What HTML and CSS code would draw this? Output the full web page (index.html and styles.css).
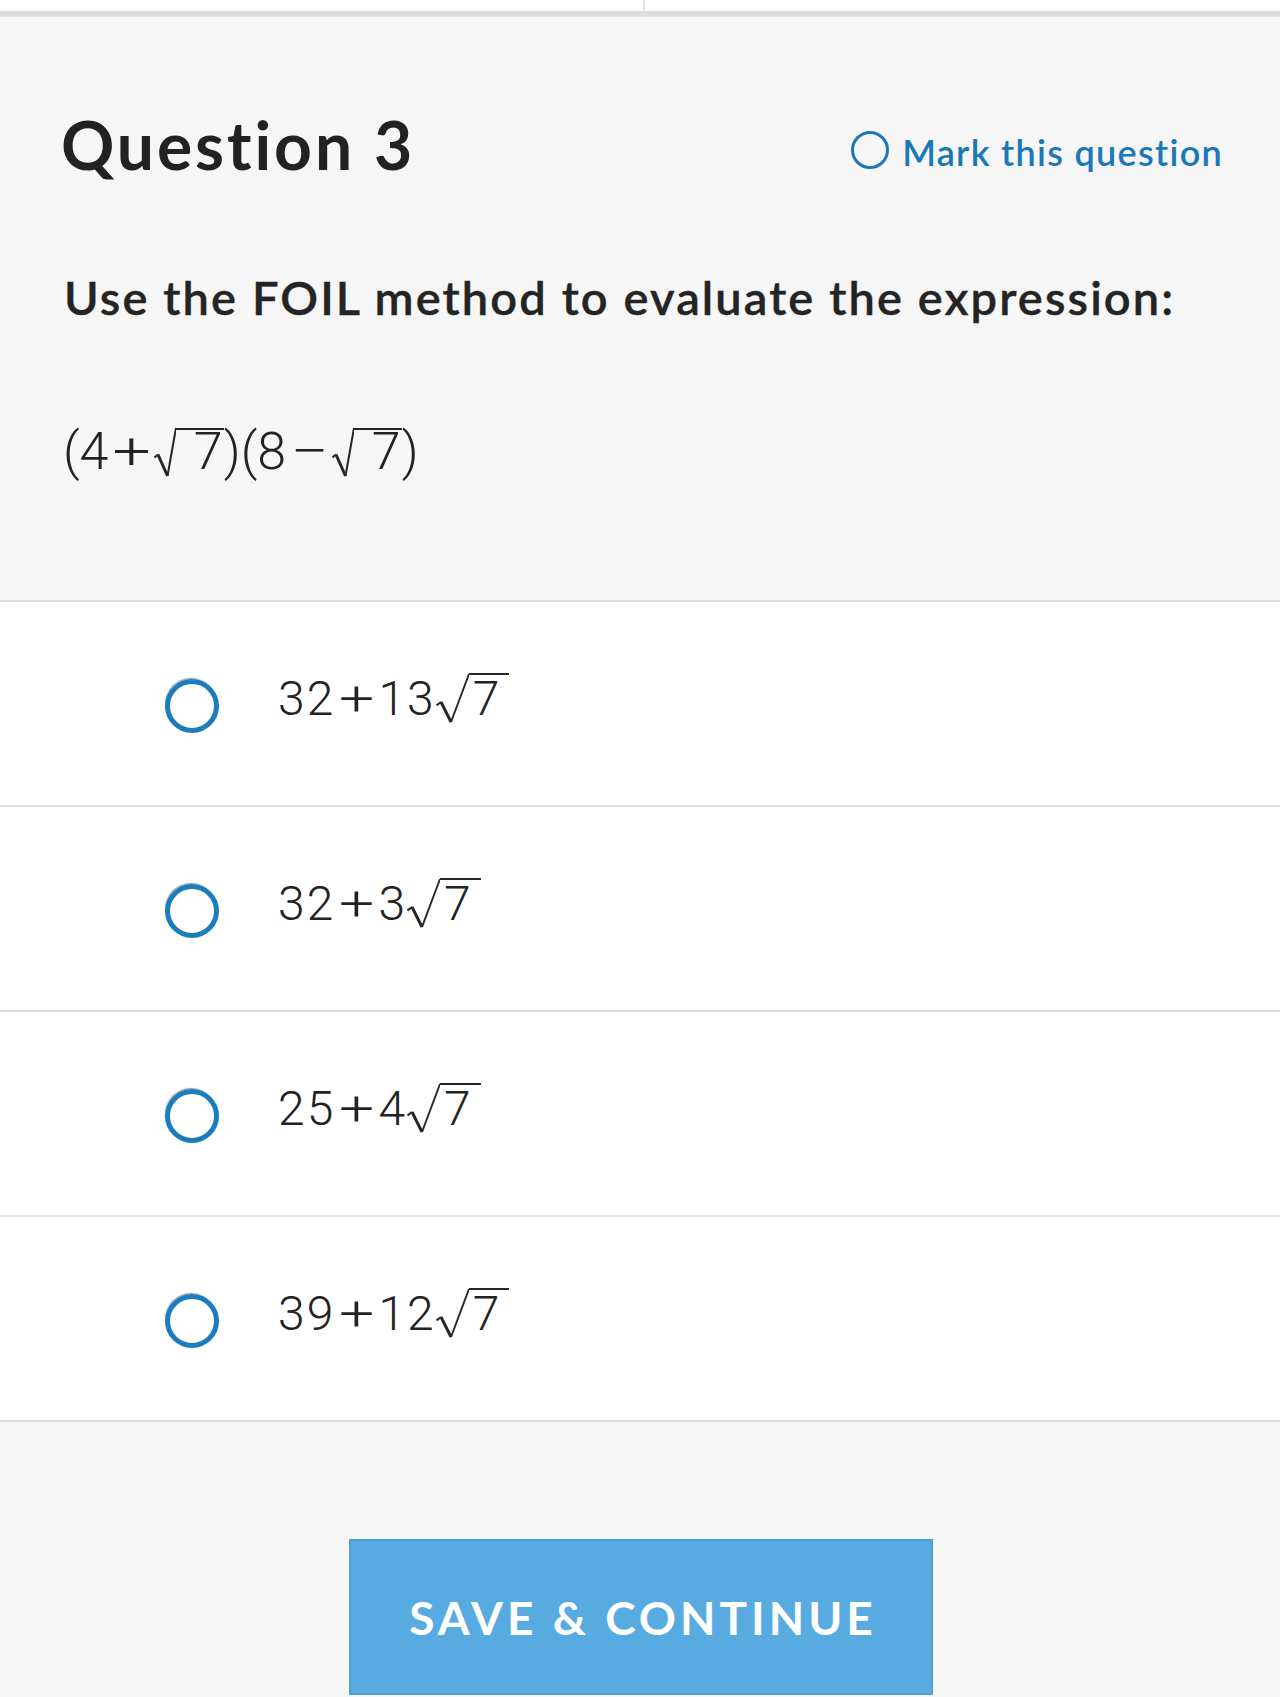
FILE: index.html
```html
<!DOCTYPE html>
<html lang="en">
<head>
<meta charset="utf-8">
<title>Question 3</title>
<link rel="stylesheet" href="styles.css">
</head>
<body>
<div class="topbar">
  <div class="tab tab-left"></div>
  <div class="tab tab-right"></div>
</div>
<div class="topshade"></div>

<section class="question">
  <div class="qhead">
    <h1 class="qtitle">Question 3</h1>
    <a class="mark" href="#"><span class="mark-circle"></span><span class="mark-text">Mark this question</span></a>
  </div>
  <p class="prompt">Use the FOIL method to evaluate the expression:</p>
  <div class="math expr"><span class="paren">(</span><span class="num">4</span><span class="op">+</span><span class="sqrt"><svg class="rad rad-expr" viewBox="0 0 22 50" preserveAspectRatio="none"><path d="M0.5 30.5 L4 27.5" fill="none" stroke="#262626" stroke-width="2"/><path d="M4 27.5 L13.5 49" fill="none" stroke="#262626" stroke-width="3"/><path d="M13.5 49 L22 1" fill="none" stroke="#262626" stroke-width="2"/></svg><span class="radicand">7</span></span><span class="paren">)(</span><span class="num">8</span><span class="op">&minus;</span><span class="sqrt"><svg class="rad rad-expr" viewBox="0 0 22 50" preserveAspectRatio="none"><path d="M0.5 30.5 L4 27.5" fill="none" stroke="#262626" stroke-width="2"/><path d="M4 27.5 L13.5 49" fill="none" stroke="#262626" stroke-width="3"/><path d="M13.5 49 L22 1" fill="none" stroke="#262626" stroke-width="2"/></svg><span class="radicand">7</span></span><span class="paren">)</span></div>
</section>

<ul class="answers">
  <li class="answer">
    <span class="radio"></span>
    <span class="math ans"><span class="num">32</span><span class="op">+</span><span class="num">13</span><span class="sqrt"><svg class="rad" viewBox="0 0 33 50" preserveAspectRatio="none"><path d="M0.5 32.5 L5 29" fill="none" stroke="#262626" stroke-width="2"/><path d="M5 29 L15 49" fill="none" stroke="#262626" stroke-width="3"/><path d="M15 49 L33 1" fill="none" stroke="#262626" stroke-width="2"/></svg><span class="radicand">7</span></span></span>
  </li>
  <li class="answer">
    <span class="radio"></span>
    <span class="math ans"><span class="num">32</span><span class="op">+</span><span class="num">3</span><span class="sqrt"><svg class="rad" viewBox="0 0 33 50" preserveAspectRatio="none"><path d="M0.5 32.5 L5 29" fill="none" stroke="#262626" stroke-width="2"/><path d="M5 29 L15 49" fill="none" stroke="#262626" stroke-width="3"/><path d="M15 49 L33 1" fill="none" stroke="#262626" stroke-width="2"/></svg><span class="radicand">7</span></span></span>
  </li>
  <li class="answer">
    <span class="radio"></span>
    <span class="math ans"><span class="num">25</span><span class="op">+</span><span class="num">4</span><span class="sqrt"><svg class="rad" viewBox="0 0 33 50" preserveAspectRatio="none"><path d="M0.5 32.5 L5 29" fill="none" stroke="#262626" stroke-width="2"/><path d="M5 29 L15 49" fill="none" stroke="#262626" stroke-width="3"/><path d="M15 49 L33 1" fill="none" stroke="#262626" stroke-width="2"/></svg><span class="radicand">7</span></span></span>
  </li>
  <li class="answer">
    <span class="radio"></span>
    <span class="math ans"><span class="num">39</span><span class="op">+</span><span class="num">12</span><span class="sqrt"><svg class="rad" viewBox="0 0 33 50" preserveAspectRatio="none"><path d="M0.5 32.5 L5 29" fill="none" stroke="#262626" stroke-width="2"/><path d="M5 29 L15 49" fill="none" stroke="#262626" stroke-width="3"/><path d="M15 49 L33 1" fill="none" stroke="#262626" stroke-width="2"/></svg><span class="radicand">7</span></span></span>
  </li>
</ul>

<div class="footer">
  <button class="save" type="button">SAVE &amp; CONTINUE</button>
</div>
</body>
</html>
```

FILE: styles.css
```css
html, body {
  margin: 0;
  padding: 0;
}

body {
  background: #f6f6f6;
  font-family: Lato, "Open Sans", sans-serif;
  color: #242424;
  overflow: hidden;
}

.topbar {
  display: flex;
  height: 11px;
  background: #ffffff;
}

.tab {
  height: 100%;
}

.tab-left {
  width: 643px;
  border-right: 2px solid #e4e4e4;
}

.tab-right {
  flex: 1;
}

.topshade {
  height: 6px;
  background: linear-gradient(#dcdcdc, #dcdcdc 70%, #e9e9e9);
}

.question {
  padding: 0 57px 0 61px;
  height: 583px;
  box-sizing: border-box;
}

.qhead {
  display: flex;
  justify-content: space-between;
  align-items: flex-start;
  padding-top: 88px;
}

.qtitle {
  margin: 0;
  font-size: 66px;
  line-height: 80px;
  font-weight: 700;
  color: #222222;
  letter-spacing: 2.9px;
}

.mark {
  display: flex;
  align-items: center;
  color: #1a78b8;
  text-decoration: none;
  font-size: 36px;
  line-height: 40px;
  font-weight: 600;
  letter-spacing: 1.3px;
  gap: 13px;
  margin-top: 27px;
}

.mark-circle {
  width: 32px;
  height: 32px;
  border: 3.5px solid #1a78b8;
  border-radius: 50%;
  margin-top: -4px;
}

.prompt {
  margin: 82px 0 0 3px;
  font-size: 47px;
  line-height: 60px;
  font-weight: 600;
  letter-spacing: 2.1px;
  color: #242424;
  -webkit-text-stroke: 0.4px #242424;
}

.math {
  font-family: Roboto, "Liberation Sans", Arial, sans-serif;
  font-weight: 300;
  color: #222222;
  white-space: nowrap;
}

.expr {
  display: block;
  margin-top: 95px;
  font-size: 52px;
  line-height: 60px;
  margin-left: 2px;
}

.num {
  letter-spacing: 2px;
}

.op {
  display: inline-block;
  transform: scaleX(1.3);
  margin: 0 8px;
}

.expr .op {
  margin: 0 7px;
}

.sqrt {
  white-space: nowrap;
}

.rad {
  display: inline-block;
  width: 33px;
  height: 50px;
  vertical-align: -8px;
}

.rad-expr {
  width: 22px;
}

.radicand {
  display: inline-block;
  border-top: 2px solid #262626;
  line-height: 42px;
  padding: 3px 10px 0 4px;
}

.expr .radicand {
  line-height: 40px;
  padding: 2px 1px 0 18px;
}

.answers {
  list-style: none;
  margin: 0;
  padding: 0;
  border-top: 2px solid #dedede;
}

.answer {
  display: flex;
  align-items: center;
  height: 203px;
  background: #ffffff;
  border-bottom: 2px solid #dedede;
  padding-left: 165px;
}

.radio {
  width: 44px;
  height: 44px;
  border: 5px solid #1b7dbd;
  border-radius: 50%;
  flex: none;
  box-shadow: -1px -2px 1px -1px rgba(70, 70, 70, 0.55);
  margin-top: 4px;
}

.ans {
  display: block;
  font-size: 48px;
  line-height: 60px;
  margin-left: 59px;
  margin-bottom: 10px;
}

.footer {
  display: flex;
  justify-content: center;
  padding-top: 117px;
}

.save {
  width: 584px;
  height: 156px;
  background: #58abe0;
  border: 2px solid #4f9ed6;
  color: #ffffff;
  font-family: Lato, "Open Sans", sans-serif;
  font-weight: 700;
  font-size: 46px;
  letter-spacing: 4px;
  padding: 0 0 0 4px;
  margin-left: 2px;
  cursor: pointer;
}
```
